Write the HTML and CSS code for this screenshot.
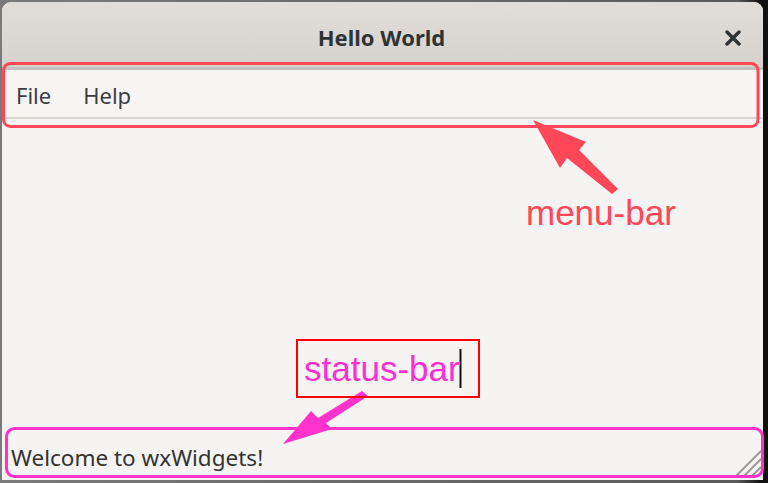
FILE: index.html
```html
<!DOCTYPE html>
<html>
<head>
<meta charset="utf-8">
<link rel="stylesheet" href="styles.css">
</head>
<body>
<div class="page">
  <div class="window">
    <div class="titlebar">
      <span></span>
      <span class="title">Hello World</span>
      <span class="close">
        <svg width="16" height="16" viewBox="0 0 16 16"><path d="M2 2 L14 14 M14 2 L2 14" stroke="#2e3436" stroke-width="3.4" stroke-linecap="round"/></svg>
      </span>
    </div>
    <div class="menubar">
      <span class="menu-item">File</span>
      <span class="menu-item">Help</span>
    </div>
    <div class="content"></div>
    <div class="statusbar">
      <span class="status-text">Welcome to wxWidgets!</span>
      <svg class="grip" width="30" height="30" viewBox="0 0 30 30">
        <path d="M3 29 L29 3 M11 29 L29 11 M19 29 L29 19" stroke="#9a9896" stroke-width="2"/>
      </svg>
    </div>
  </div>

  <svg class="annot" width="768" height="483" viewBox="0 0 768 483">
    <rect x="3.5" y="63.5" width="754.5" height="63" rx="7" fill="none" stroke="#ff4757" stroke-width="3"/>
    <polygon points="533,120 586,142 579,150 618,189 612,194 567,158 560,168" fill="#ff4757"/>
    <rect x="6.5" y="428.5" width="756" height="48" rx="8" fill="none" stroke="#ff33cc" stroke-width="3"/>
    <polygon points="283,444 311,411 318,418 362,391 368,396 326,423 332,429" fill="#ff33cc"/>
    <rect x="297" y="340" width="182" height="57" fill="none" stroke="#ff0000" stroke-width="2"/>
    <line x1="460.5" y1="349" x2="460.5" y2="388" stroke="#111" stroke-width="2"/>
  </svg>
  <div class="label label-menu">menu-bar</div>
  <div class="label label-status">status-bar</div>
</div>
</body>
</html>
```
FILE: styles.css
```css
html, body {
  margin: 0;
  padding: 0;
}
body {
  background: #4a4a4a;
  width: 768px;
  height: 483px;
  overflow: hidden;
}
.page {
  position: relative;
  width: 768px;
  height: 483px;
  padding: 2px 0 0 2px;
  box-sizing: border-box;
  background: linear-gradient(to right, #7a7a7a 0, #5a5a5a 96%, #111 99%);
}
.window {
  width: 761px;
  height: 478px;
  border-radius: 9px 9px 0 0;
  overflow: hidden;
  display: flex;
  flex-direction: column;
  background: #f5f4f2;
  font-family: "Noto Sans", "DejaVu Sans", sans-serif;
  color: #2e3436;
}
.titlebar {
  height: 65px;
  box-sizing: border-box;
  padding-top: 20px;
  display: grid;
  grid-template-columns: 1fr auto 1fr;
  align-items: start;
  background: linear-gradient(to bottom, #e1deda, #d6d2ce);
}
.title {
  font-weight: bold;
  font-size: 22px;
  line-height: 30px;
  color: #2e3436;
  margin-right: 2px;
}
.close {
  justify-self: end;
  padding-right: 22px;
  padding-top: 8px;
  line-height: 0;
}
.menubar {
  height: 52px;
  box-sizing: border-box;
  border-top: 3px solid #c4c0bc;
  border-bottom: 2px solid #d7d4d0;
  background: #f6f5f4;
  padding: 10px 0 0 14px;
  display: flex;
  gap: 32px;
}
.menu-item {
  font-size: 22px;
  line-height: 30px;
  color: #3a3d3f;
}
.content {
  flex: 1;
  background: #f5f4f2;
}
.statusbar {
  height: 40px;
  box-sizing: border-box;
  padding: 3px 1px 0 9px;
  display: flex;
  justify-content: space-between;
  align-items: flex-start;
  background: #f5f4f2;
}
.status-text {
  font-size: 22.5px;
  line-height: 30px;
  color: #333;
}
.grip {
  align-self: flex-end;
  margin-bottom: 2px;
}
.annot {
  position: absolute;
  left: 0;
  top: 0;
  pointer-events: none;
}
.label {
  position: absolute;
  font-family: "Liberation Sans", Arial, sans-serif;
  font-size: 35px;
  line-height: 35px;
  white-space: nowrap;
}
.label-menu {
  left: 526px;
  top: 195px;
  color: #ff4757;
}
.label-status {
  left: 304px;
  top: 351px;
  color: #ff2ed2;
}
```
